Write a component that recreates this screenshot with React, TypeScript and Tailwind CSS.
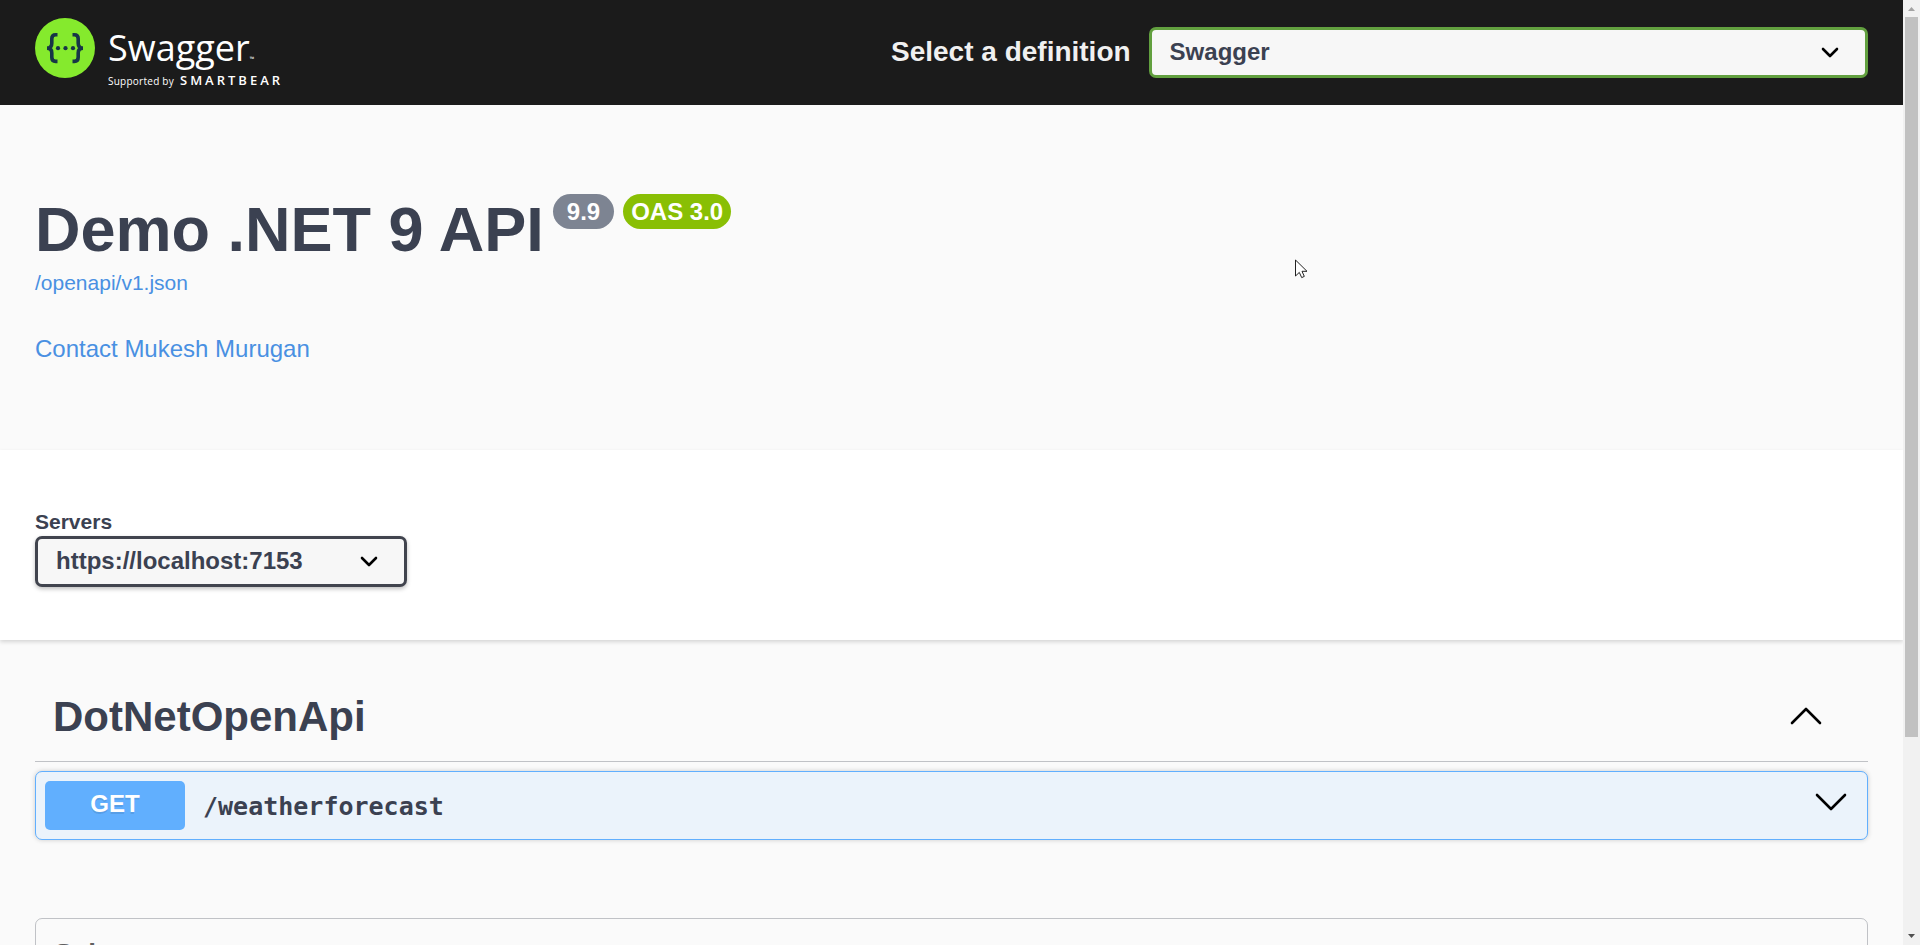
import type { ReactNode } from "react";

function Chevron({ up = false }: { up?: boolean }) {
  return (
    <svg viewBox="0 0 32 18" className="h-[18px] w-8" fill="none" stroke="#000" strokeWidth="2.6" strokeLinecap="round" strokeLinejoin="round" aria-hidden="true">
      <path d={up ? "M2 16 16 2l14 14" : "M2 2l14 14L30 2"} />
    </svg>
  );
}

function SelectBox({ id, className, children }: { id: string; className: string; children: ReactNode }) {
  return (
    <div className="relative min-w-0 flex-1">
      <select
        id={id}
        className={`block h-[51px] w-full appearance-none rounded-[7px] border-[3px] bg-[#f7f7f7] pr-16 pb-0.5 pl-[18px] text-2xl leading-8 font-bold text-[#3b4151] ${className}`}
      >
        {children}
      </select>
      <svg viewBox="0 0 18 12" className="pointer-events-none absolute top-5 right-[29px] h-3 w-[18px]" fill="none" stroke="#000" strokeWidth="2.6" strokeLinecap="round" strokeLinejoin="round" aria-hidden="true">
        <path d="M2 2l7 7 7-7" />
      </svg>
    </div>
  );
}

function Logo() {
  return (
    <a href="#" className="flex gap-[13px]">
      <svg viewBox="0 0 60 60" className="h-[60px] w-[60px]" aria-hidden="true">
        <circle cx="30" cy="30" r="30" fill="#85ea2d" />
        <g fill="none" stroke="#173647" strokeWidth="3.6">
          <path d="M22.500 16.700h-1.800c-2.800 0-3.900 1.500-3.900 4.100v4.400c0 3-1.400 4.900-4.800 4.900 3.400 0 4.800 1.800 4.800 4.800v4.400c0 2.600 1.100 4.100 3.900 4.100h1.800" />
          <path d="M37.500 16.700h1.800c2.800 0 3.900 1.500 3.900 4.100v4.400c0 3 1.400 4.900 4.800 4.900-3.400 0-4.800 1.800-4.800 4.800v4.400c0 2.600-1.100 4.100-3.900 4.100h-1.800" />
        </g>
        <g fill="#173647">
          <circle cx="23" cy="30.200" r="2.100" />
          <circle cx="30.500" cy="30.200" r="2.100" />
          <circle cx="38" cy="30.200" r="2.100" />
        </g>
      </svg>
      <span className="flex flex-col pt-1.5 font-['Open_Sans','Noto_Sans',sans-serif] text-white">
        <span className="flex h-12 items-baseline text-4xl leading-12">
          Swagger<span className="text-[6px] leading-4">™</span>
        </span>
        <span className="flex items-baseline gap-1.5 text-[10px] leading-4 tracking-wide">
          Supported by
          <span className="text-[13px] leading-4 font-semibold tracking-[3px]">SMARTBEAR</span>
        </span>
      </span>
    </a>
  );
}

function Topbar() {
  return (
    <header className="flex h-[105px] items-start justify-between bg-[#1b1b1b] px-[35px] pt-[18px]">
      <Logo />
      <div className="flex w-[977px] items-center gap-[18px] pt-[9px]">
        <label htmlFor="definition" className="pb-0.5 text-[28px] leading-8 font-bold whitespace-nowrap text-[#f0f0f0]">
          Select a definition
        </label>
        <SelectBox id="definition" className="border-[#62a03f]">
          <option>Swagger</option>
        </SelectBox>
      </div>
    </header>
  );
}

function Info() {
  return (
    <section className="h-[345px] px-[35px] pt-[88px]">
      <div className="flex items-start">
        <h1 className="text-[63px] leading-[72px] font-bold">Demo .NET 9 API</h1>
        <span className="mt-px ml-[9px] flex gap-[9px] text-2xl leading-[35px] font-bold text-white">
          <span className="rounded-full bg-[#7d8492] px-3.5">9.9</span>
          <span className="rounded-full bg-[#89bf04] px-2">OAS 3.0</span>
        </span>
      </div>
      <a href="#" className="mt-1 block w-fit text-[21px] leading-7 text-[#4990e2]">/openapi/v1.json</a>
      <a href="#" className="mt-9 block w-fit text-2xl leading-8 text-[#4990e2]">Contact Mukesh Murugan</a>
    </section>
  );
}

function Servers() {
  return (
    <section className="h-[190px] bg-white px-[35px] pt-[60px] shadow-[0_2px_4px_rgba(0,0,0,0.15)]">
      <label htmlFor="servers" className="block pb-0.5 text-[21px] leading-6 font-bold">Servers</label>
      <div className="flex w-[372px]">
        <SelectBox id="servers" className="border-[#41444e] shadow-[0_2px_4px_rgba(0,0,0,0.25)]">
          <option>https://localhost:7153</option>
        </SelectBox>
      </div>
    </section>
  );
}

function Operations() {
  return (
    <section className="px-[35px] pt-[53px]">
      <h2 className="flex items-center justify-between border-b border-[#3b4151]/30 pr-[46px] pb-5 pl-[18px] text-[42px] leading-12 font-bold">
        DotNetOpenApi
        <button type="button" aria-label="Collapse DotNetOpenApi" className="flex pb-0.5">
          <Chevron up />
        </button>
      </h2>
      <div className="mt-[9px] flex h-[69px] items-center rounded-[7px] border border-[#61affe] bg-[#ebf3fb] pr-5 pl-[9px] shadow-[0_0_5px_rgba(0,0,0,0.19)]">
        <button type="button" className="flex min-w-0 flex-1 items-center gap-[18px] text-left">
          <span className="w-[140px] rounded-[5px] bg-[#61affe] pt-[7px] pb-2.5 text-center text-2xl leading-8 font-bold text-white [text-shadow:0_2px_0_rgba(0,0,0,0.1)]">GET</span>
          <span className="pt-0.5 font-['DejaVu_Sans_Mono',monospace] text-[25px] leading-8 font-bold">/weatherforecast</span>
        </button>
        <button type="button" aria-label="Expand operation" className="flex pb-2">
          <Chevron />
        </button>
      </div>
    </section>
  );
}

function Scrollbar() {
  return (
    <div className="flex w-[17px] shrink-0 flex-col items-center bg-[#f1f1f1]" aria-hidden="true">
      <svg viewBox="0 0 17 17" className="h-[17px] w-[17px]">
        <path d="M5 11h7L8.500 7z" fill="#a3a3a3" />
      </svg>
      <div className="flex w-[13px] flex-1 flex-col">
        <div className="h-[79%] bg-[#c1c1c1]" />
      </div>
      <svg viewBox="0 0 17 17" className="h-[17px] w-[17px]">
        <path d="M5 6h7L8.500 10z" fill="#505050" />
      </svg>
    </div>
  );
}

export default function App() {
  return (
    <div className="relative flex h-screen overflow-hidden bg-[#fafafa] font-['Liberation_Sans',Arial,sans-serif] text-[#3b4151]">
      <main className="min-w-0 flex-1 overflow-hidden">
        <Topbar />
        <Info />
        <Servers />
        <Operations />
        {/* Models */}
        <section className="mx-[35px] mt-[78px] rounded-[7px] border border-[#3b4151]/30 px-[18px] py-[19px]">
          <h2 className="text-[28px] leading-8 font-bold text-[#606060]">Schemas</h2>
        </section>
      </main>
      <Scrollbar />
      <svg viewBox="0 0 13 20" className="pointer-events-none absolute top-[259px] left-[1295px] h-5 w-[13px]" aria-hidden="true">
        <path d="M.5 1v16l3.800-3.600 2.400 5.200 2.600-1.200-2.300-5.100H12z" fill="#fff" stroke="#222" />
      </svg>
    </div>
  );
}
